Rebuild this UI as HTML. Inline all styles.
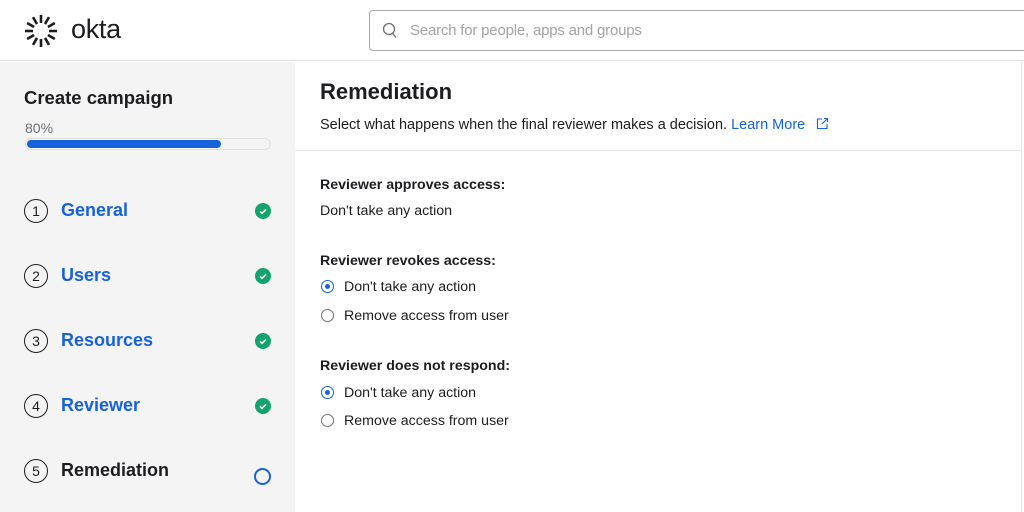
<!DOCTYPE html>
<html><head><style>
*{margin:0;padding:0;box-sizing:border-box}
body{width:1024px;height:512px;overflow:hidden;background:#fff;font-family:"Liberation Sans",sans-serif;color:#1d1d21;position:relative}
.a{position:absolute}
.hdr{left:0;top:0;width:1024px;height:61px;border-bottom:1px solid #e2e2e2;background:#fff}
.side{left:0;top:62px;width:295px;height:450px;background:#f4f4f4}
.step{position:absolute;left:24px;width:250px;height:26px}
.num{position:absolute;left:0;top:0;width:24px;height:24px;border:1px solid #1d1d21;border-radius:50%;font-size:14px;text-align:center;line-height:22px}
.lbl{position:absolute;left:37px;top:1px;font-size:18px;font-weight:bold;color:#1662dd}
.chk{position:absolute;left:231px;top:4px;width:16px;height:16px;border-radius:50%;background:#14a36d}
.t{font-size:14.2px;color:#1d1d21}
.b{font-weight:bold}
.r{position:absolute;left:321px;width:13px;height:13px;border-radius:50%;border:1px solid #6e6e78;background:#fff}
.r.on{border:1.5px solid #1662dd}
.r.on::after{content:"";position:absolute;left:2.5px;top:2.5px;width:5px;height:5px;border-radius:50%;background:#1662dd}
</style></head><body>
<div class="a hdr"></div>
<svg class="a" style="left:24px;top:14px" width="34" height="34" viewBox="-17 -17 34 34">
<g stroke="#1d1d21" stroke-width="2.6" stroke-linecap="butt">
<line x1="0" y1="-8" x2="0" y2="-16"/><line x1="0" y1="-8" x2="0" y2="-16" transform="rotate(30)"/><line x1="0" y1="-8" x2="0" y2="-16" transform="rotate(60)"/><line x1="0" y1="-8" x2="0" y2="-16" transform="rotate(90)"/><line x1="0" y1="-8" x2="0" y2="-16" transform="rotate(120)"/><line x1="0" y1="-8" x2="0" y2="-16" transform="rotate(150)"/><line x1="0" y1="-8" x2="0" y2="-16" transform="rotate(180)"/><line x1="0" y1="-8" x2="0" y2="-16" transform="rotate(210)"/><line x1="0" y1="-8" x2="0" y2="-16" transform="rotate(240)"/><line x1="0" y1="-8" x2="0" y2="-16" transform="rotate(270)"/><line x1="0" y1="-8" x2="0" y2="-16" transform="rotate(300)"/><line x1="0" y1="-8" x2="0" y2="-16" transform="rotate(330)"/>
</g></svg>
<div class="a" style="left:71px;top:14px;font-size:27px;color:#1d1d21;letter-spacing:-0.3px">okta</div>
<div class="a" style="left:369px;top:10px;width:670px;height:41px;border:1px solid #a8a8ad;border-radius:4px"></div>
<svg class="a" style="left:382px;top:22px" width="16" height="18" viewBox="0 0 16 18"><circle cx="7" cy="7" r="5.5" fill="none" stroke="#6e6e78" stroke-width="1.3"/><line x1="10.5" y1="11" x2="14" y2="15.5" stroke="#6e6e78" stroke-width="1.3"/></svg>
<div class="a" style="left:410px;top:22px;font-size:15px;color:#a3a3a8;letter-spacing:-0.2px">Search for people, apps and groups</div>

<div class="a side"></div>
<div class="a" style="left:24px;top:87px;font-size:18.5px;font-weight:bold">Create campaign</div>
<div class="a" style="left:25px;top:120px;font-size:14px;color:#6e6e78">80%</div>
<div class="a" style="left:25px;top:138px;width:246px;height:12px;border:1px solid #e0e0e0;border-radius:6px;background:#f4f4f4"></div>
<div class="a" style="left:27px;top:140px;width:194px;height:8px;border-radius:4px;background:#1662dd"></div>

<div class="step" style="top:199px"><div class="num">1</div><div class="lbl">General</div><div class="chk"><svg width="16" height="16"><path d="M5 8.3l2 2 4-4" stroke="#fff" stroke-width="1.5" fill="none"/></svg></div></div>
<div class="step" style="top:264px"><div class="num">2</div><div class="lbl">Users</div><div class="chk"><svg width="16" height="16"><path d="M5 8.3l2 2 4-4" stroke="#fff" stroke-width="1.5" fill="none"/></svg></div></div>
<div class="step" style="top:329px"><div class="num">3</div><div class="lbl">Resources</div><div class="chk"><svg width="16" height="16"><path d="M5 8.3l2 2 4-4" stroke="#fff" stroke-width="1.5" fill="none"/></svg></div></div>
<div class="step" style="top:394px"><div class="num">4</div><div class="lbl">Reviewer</div><div class="chk"><svg width="16" height="16"><path d="M5 8.3l2 2 4-4" stroke="#fff" stroke-width="1.5" fill="none"/></svg></div></div>
<div class="step" style="top:459px"><div class="num">5</div><div class="lbl" style="color:#1d1d21">Remediation</div><div style="position:absolute;left:230px;top:9px;width:17px;height:17px;border:2px solid #1662dd;border-radius:50%"></div></div>

<div class="a" style="left:1021px;top:62px;width:1px;height:450px;background:#e6e6e6"></div>
<div class="a" style="left:320px;top:79px;font-size:22px;font-weight:bold">Remediation</div>
<div class="a" style="left:320px;top:117px;font-size:14.5px">Select what happens when the final reviewer makes a decision. <span style="color:#1662dd">Learn More</span></div>
<svg class="a" style="left:816px;top:117px" width="13" height="13" viewBox="0 0 13 13"><path d="M6 2H1.5v9.5H11V7M8 1.5h3.5V5M11.5 1.5L6 7" fill="none" stroke="#1662dd" stroke-width="1.1"/></svg>
<div class="a" style="left:295px;top:150px;width:726px;height:1px;background:#e6e6e6"></div>

<div class="a t b" style="left:320px;top:177px">Reviewer approves access:</div>
<div class="a t" style="left:320px;top:203px">Don't take any action</div>
<div class="a t b" style="left:320px;top:253px">Reviewer revokes access:</div>
<div class="r on" style="top:280px"></div><div class="a t" style="left:344px;top:279px">Don't take any action</div>
<div class="r" style="top:309px"></div><div class="a t" style="left:344px;top:308px">Remove access from user</div>
<div class="a t b" style="left:320px;top:358px">Reviewer does not respond:</div>
<div class="r on" style="top:386px"></div><div class="a t" style="left:344px;top:385px">Don't take any action</div>
<div class="r" style="top:414px"></div><div class="a t" style="left:344px;top:413px">Remove access from user</div>
</body></html>
